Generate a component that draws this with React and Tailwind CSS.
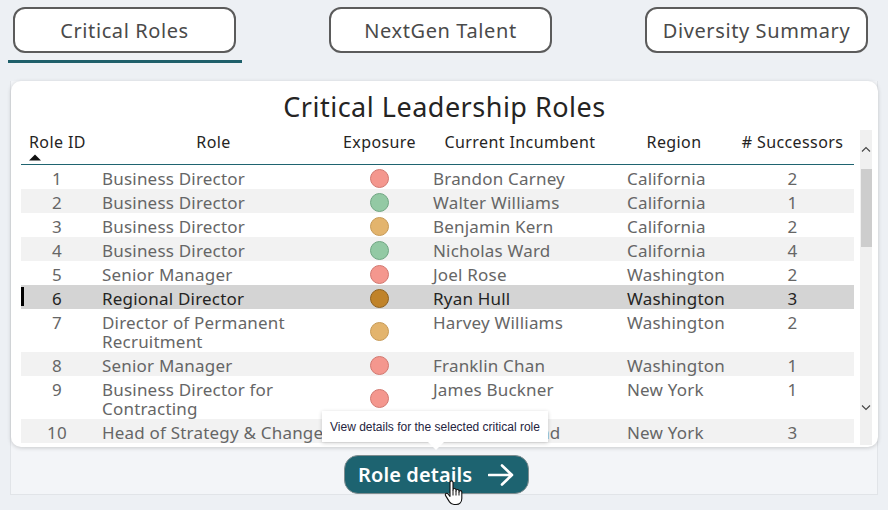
import React from 'react';

const rows = [
  { id: 1, role: 'Business Director', exp: 'red', name: 'Brandon Carney', region: 'California', n: 2 },
  { id: 2, role: 'Business Director', exp: 'green', name: 'Walter Williams', region: 'California', n: 1 },
  { id: 3, role: 'Business Director', exp: 'amber', name: 'Benjamin Kern', region: 'California', n: 2 },
  { id: 4, role: 'Business Director', exp: 'green', name: 'Nicholas Ward', region: 'California', n: 4 },
  { id: 5, role: 'Senior Manager', exp: 'red', name: 'Joel Rose', region: 'Washington', n: 2 },
  { id: 6, role: 'Regional Director', exp: 'gold', name: 'Ryan Hull', region: 'Washington', n: 3, selected: true },
  { id: 7, role: 'Director of Permanent Recruitment', exp: 'amber', name: 'Harvey Williams', region: 'Washington', n: 2 },
  { id: 8, role: 'Senior Manager', exp: 'red', name: 'Franklin Chan', region: 'Washington', n: 1 },
  { id: 9, role: 'Business Director for Contracting', exp: 'red', name: 'James Buckner', region: 'New York', n: 1 },
  { id: 10, role: 'Head of Strategy & Change', exp: 'green', name: 'Michael Bernad', region: 'New York', n: 3 },
];

const dotClass = {
  red: 'bg-[#f4978e] border-[#d27870]',
  green: 'bg-[#93c9a4] border-[#71a683]',
  amber: 'bg-[#e3b46d] border-[#c79a56]',
  gold: 'bg-[#c0832a] border-[#8f611f]',
};

const cols = 'grid grid-cols-[70px_245px_87px_194px_114px_123px]';

const Tab = ({ label }) => (
  <button className="w-[223px] h-[46px] pt-[2px] rounded-[12px] border-2 border-[#5b5b5b] bg-white text-[20px] text-[#4a4a4a] tracking-[0.6px]">
    {label}
  </button>
);

const HandCursor = () => (
  <svg width="20" height="26" viewBox="0 0 20 26" className="absolute left-[444px] top-[480px]">
    <path
      d="M6 2.5c0-1 .7-1.6 1.5-1.6S9 1.5 9 2.5V10c0-.9.7-1.5 1.5-1.5S12 9.1 12 10v1c0-.9.7-1.5 1.5-1.5S15 10.1 15 11v1c0-.9.7-1.4 1.4-1.4s1.4.6 1.4 1.5v6.4c0 3.4-2.3 6-5.6 6H10c-2 0-3.4-1-4.5-2.6L1.6 15.6c-.5-.8-.3-1.7.4-2.1.7-.4 1.5-.2 2 .5L6 16.3V2.5z"
      fill="#fff"
      stroke="#111"
      strokeWidth="1.1"
      strokeLinejoin="round"
    />
    <path d="M9 10v5.5M12 11v4.5M15 12v3.5" stroke="#111" strokeWidth="1" />
  </svg>
);

export default function App() {
  return (
    <div className="relative w-[888px] h-[510px] overflow-hidden bg-[#edf0f4] font-['Noto_Sans',sans-serif]">
      <div className="flex gap-[93px] pl-[13px] pt-[7px]">
        <Tab label="Critical Roles" />
        <Tab label="NextGen Talent" />
        <Tab label="Diversity Summary" />
      </div>
      <div className="ml-[8px] mt-[7px] w-[234px] h-[3px] bg-[#1e5f6a]" />

      <div className="ml-[10px] mt-[18px] w-[868px] h-[414px] flex flex-col items-start bg-[#f3f5f8] border-x border-b border-[#e1e4e8]">
        <div className="w-[867px] h-[367px] bg-white rounded-[10px] shadow-[0_1px_4px_rgba(0,0,0,0.18)] flex flex-col">
          <div className="mt-[10px] h-[32px] leading-[32px] text-center text-[27px] text-[#252423] tracking-[0.5px]">
            Critical Leadership Roles
          </div>
          <div className="mt-[7px] flex pl-[10px] gap-[6px]">
            <div className="w-[833px] tracking-[0.2px]">
              <div className={`${cols} h-[35px] border-b border-[#1f6470] text-[#252423] text-[16px] tracking-[0.4px] pt-[3px] leading-[19px]`}>
                <div className="pl-[8px] flex flex-col items-start">
                  <span>Role ID</span>
                  <svg width="12" height="7" viewBox="0 0 12 7" className="mt-[2px]">
                    <path d="M0 6.5L6 0.5L12 6.5Z" fill="#111" />
                  </svg>
                </div>
                <div className="text-center">Role</div>
                <div className="text-center">Exposure</div>
                <div className="text-center">Current Incumbent</div>
                <div className="text-center">Region</div>
                <div className="text-center"># Successors</div>
              </div>
              <div className="h-[280px] overflow-hidden text-[17px]">
                {rows.map((r, i) => (
                  <div
                    key={r.id}
                    className={`${cols} relative leading-[19px] pt-[3.5px] pb-[1.5px] ${
                      r.selected
                        ? 'bg-[#d4d4d4] text-[#252423]'
                        : i % 2 === 1
                        ? 'bg-[#f2f2f2] text-[#666]'
                        : 'bg-white text-[#666]'
                    }`}
                  >
                    {r.selected && <span className="absolute left-0 top-[2px] w-[3px] h-[19px] bg-black" />}
                    <div className="text-center pl-[2px]">{r.id}</div>
                    <div className="pl-[11px]">{r.role}</div>
                    <div className="flex items-center justify-center">
                      <span className={`w-[19px] h-[19px] rounded-full border ${dotClass[r.exp]}`} />
                    </div>
                    <div className="pl-[10px]">{r.name}</div>
                    <div className="pl-[10px]">{r.region}</div>
                    <div className="text-center">{r.n}</div>
                  </div>
                ))}
              </div>
            </div>
            <div className="w-[12px] h-[315px] bg-[#f0f0f0] flex flex-col items-center">
              <svg width="10" height="6" viewBox="0 0 10 6" className="mt-[16px]">
                <path d="M1 5.5L5 1.5L9 5.5" fill="none" stroke="#444" strokeWidth="1.1" />
              </svg>
              <div className="mt-[17px] w-[11px] h-[78px] bg-[#cdcdcd]" />
              <svg width="10" height="6" viewBox="0 0 10 6" className="mt-[158px]">
                <path d="M1 0.5L5 4.5L9 0.5" fill="none" stroke="#444" strokeWidth="1.1" />
              </svg>
            </div>
          </div>
        </div>
        <button className="ml-[333px] mt-[8px] w-[185px] h-[39px] rounded-[14px] bg-[#1d6370] border border-[#7f8d90] flex items-center pl-[13px] gap-[16px] text-white text-[20px] font-semibold tracking-[0.1px]">
          <span>Role details</span>
          <svg width="26" height="22" viewBox="0 0 26 22">
            <path d="M1 11H24M14 1.5L24 11L14 20.5" fill="none" stroke="#fff" strokeWidth="2.6" strokeLinecap="round" strokeLinejoin="round" />
          </svg>
        </button>
      </div>

      <div className="absolute left-[322px] top-[411px] w-[226px] h-[31px] bg-white shadow-[0_1px_4px_rgba(0,0,0,0.2)] flex items-center justify-center text-[12px] text-[#252440] font-['Liberation_Sans',sans-serif]">
        View details for the selected critical role
        <span className="absolute left-[106px] -bottom-[8px] w-0 h-0 border-x-[8px] border-x-transparent border-t-[8px] border-t-white" />
      </div>
      <HandCursor />
    </div>
  );
}
